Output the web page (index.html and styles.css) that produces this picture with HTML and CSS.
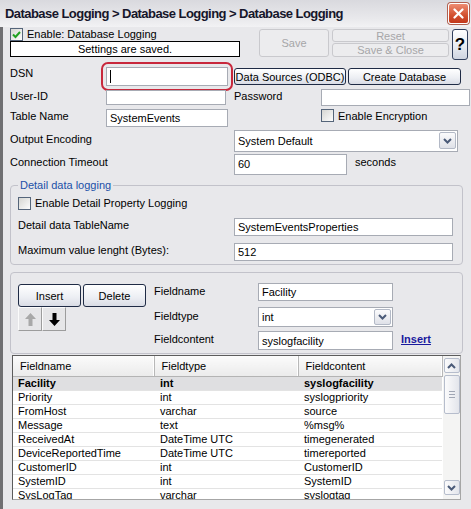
FILE: index.html
```html
<!DOCTYPE html>
<html>
<head>
	<meta charset="UTF-8">
	<title>Database Logging</title>
	<link rel="stylesheet" href="styles.css">
</head>
<body>

<div class="titlebar">
	<span class="title">Database Logging &gt; Database Logging &gt; Database Logging</span>
	<span class="closebtn">
		<svg width="11" height="11" viewBox="0 0 11 11"><path d="M1.5 1.5 L9.5 9.5 M9.5 1.5 L1.5 9.5" stroke="#fff" stroke-width="2.2" stroke-linecap="round"/></svg>
	</span>
</div>

<div class="frame">

	<div class="top">
		<div class="status">
			<div class="chk">
				<span class="box"><svg width="11" height="11" viewBox="0 0 11 11"><path d="M2 5.5 L4.5 8 L9 3" fill="none" stroke="#21a121" stroke-width="2"/></svg></span>
				Enable: Database Logging
			</div>
			<div class="saved">Settings are saved.</div>
		</div>
		<button class="btn off save">Save</button>
		<div class="stack">
			<button class="btn off reset">Reset</button>
			<button class="btn off close">Save &amp; Close</button>
		</div>
		<button class="btn help">?</button>
	</div>

	<div class="row r1">
		<span class="lbl w91">DSN</span>
		<span class="ring"><span class="inp dsn"><span class="caret"></span></span></span>
		<button class="btn dark src">Data Sources (ODBC)</button>
		<button class="btn dark mk">Create Database</button>
	</div>

	<div class="row r2">
		<span class="lbl w96">User-ID</span>
		<input class="inp uid" type="text" value="">
		<span class="lbl pwl">Password</span>
		<input class="inp pw" type="password" value="">
	</div>

	<div class="row r3">
		<span class="lbl w96">Table Name</span>
		<input class="inp tbl" type="text" value="SystemEvents">
		<div class="chk enc"><span class="box"></span>Enable Encryption</div>
	</div>

	<div class="row r4">
		<span class="lbl w224">Output Encoding</span>
		<div class="select enc-sel">
			<span class="val">System Default</span>
			<span class="drop"><svg width="9" height="6" viewBox="0 0 9 6"><path d="M1 1 L4.5 4.5 L8 1" fill="none" stroke="#4a5a78" stroke-width="2"/></svg></span>
		</div>
	</div>

	<div class="row r5">
		<span class="lbl w224">Connection Timeout</span>
		<input class="inp tmo" type="text" value="60">
		<span class="lbl sec">seconds</span>
	</div>

	<fieldset class="group g1">
		<legend>Detail data logging</legend>
		<div class="chk"><span class="box"></span>Enable Detail Property Logging</div>
		<div class="row grow first">
			<span class="lbl w216">Detail data TableName</span>
			<input class="inp wide" type="text" value="SystemEventsProperties">
		</div>
		<div class="row grow">
			<span class="lbl w216">Maximum value lenght (Bytes):</span>
			<input class="inp wide" type="text" value="512">
		</div>
	</fieldset>

	<fieldset class="group g2">
		<div class="btncol">
			<div class="pair">
				<button class="btn dark act">Insert</button>
				<button class="btn dark act">Delete</button>
			</div>
			<div class="arrows">
				<button class="btn arr">
					<svg width="11" height="13" viewBox="0 0 11 13"><path d="M5.5 0 L11 6 L7.5 6 L7.5 13 L3.5 13 L3.5 6 L0 6 Z" fill="#a8a8a8"/></svg>
				</button>
				<button class="btn arr">
					<svg width="11" height="13" viewBox="0 0 11 13"><path d="M3.5 0 L7.5 0 L7.5 7 L11 7 L5.5 13 L0 7 L3.5 7 Z" fill="#000"/></svg>
				</button>
			</div>
		</div>
		<div class="fields">
			<div class="frow fr1">
				<span class="lbl w104">Fieldname</span>
				<input class="inp fld" type="text" value="Facility">
			</div>
			<div class="frow fr2">
				<span class="lbl w104">Fieldtype</span>
				<div class="select fld-sel">
					<span class="val">int</span>
					<span class="drop"><svg width="9" height="6" viewBox="0 0 9 6"><path d="M1 1 L4.5 4.5 L8 1" fill="none" stroke="#4a5a78" stroke-width="2"/></svg></span>
				</div>
			</div>
			<div class="frow fr3">
				<span class="lbl w104">Fieldcontent</span>
				<input class="inp fld" type="text" value="syslogfacility">
				<a class="link" href="#">Insert</a>
			</div>
		</div>
	</fieldset>

	<div class="list">
		<table class="grid">
			<colgroup><col class="c1"><col class="c2"><col class="c3"></colgroup>
			<thead>
				<tr><th>Fieldname</th><th>Fieldtype</th><th>Fieldcontent</th></tr>
			</thead>
			<tbody>
				<tr class="sel"><td>Facility</td><td>int</td><td>syslogfacility</td></tr>
				<tr><td>Priority</td><td>int</td><td>syslogpriority</td></tr>
				<tr><td>FromHost</td><td>varchar</td><td>source</td></tr>
				<tr><td>Message</td><td>text</td><td>%msg%</td></tr>
				<tr><td>ReceivedAt</td><td>DateTime UTC</td><td>timegenerated</td></tr>
				<tr><td>DeviceReportedTime</td><td>DateTime UTC</td><td>timereported</td></tr>
				<tr><td>CustomerID</td><td>int</td><td>CustomerID</td></tr>
				<tr><td>SystemID</td><td>int</td><td>SystemID</td></tr>
				<tr><td>SysLogTag</td><td>varchar</td><td>syslogtag</td></tr>
			</tbody>
		</table>
		<div class="sb">
			<span class="sbtn"><svg width="9" height="6" viewBox="0 0 9 6"><path d="M1 5 L4.5 1.5 L8 5" fill="none" stroke="#4a5a78" stroke-width="2"/></svg></span>
			<span class="thumb"><span class="grip"></span></span>
			<span class="track"></span>
			<span class="sbtn"><svg width="9" height="6" viewBox="0 0 9 6"><path d="M1 1 L4.5 4.5 L8 1" fill="none" stroke="#4a5a78" stroke-width="2"/></svg></span>
		</div>
	</div>

</div>
</body>
</html>
```

FILE: styles.css
```css
body{
	margin:0;
	width:471px;
	height:509px;
	overflow:hidden;
	background:#e8e8eb;
	font:11px "Liberation Sans", Arial, sans-serif;
	color:#000;
}

/* title bar */
.titlebar{
	height:27px;
	box-sizing:border-box;
	display:flex;
	align-items:center;
	justify-content:space-between;
	padding:0 2px 0 5px;
	background:linear-gradient(#d9d9de, #e9e9ec 70%, #f2f2f4);
}
.title{
	font:bold 13px "Liberation Sans", Arial, sans-serif;
	letter-spacing:-0.55px;
	color:#16162a;
	white-space:nowrap;
}
.closebtn{
	width:21px;
	height:21px;
	box-sizing:border-box;
	border:1px solid #fff;
	border-radius:3px;
	box-shadow:0 0 0 1px #b06050;
	background:linear-gradient(#ee8c72, #d2502f 60%, #c2381c);
	display:flex;
	align-items:center;
	justify-content:center;
}

.frame{
	height:482px;
	box-sizing:border-box;
	border-left:3px solid #6f6f72;
	padding-left:7px;
}

/* generic controls */
button{
	font:inherit;
	padding:0;
	margin:0;
	color:#000;
}
.btn{
	box-sizing:border-box;
	border-radius:3px;
	display:flex;
	align-items:center;
	justify-content:center;
}
.btn.off{
	border:1px solid #c9c9cd;
	background:#ececee;
	color:#a6a6a8;
}
.btn.dark{
	border:1px solid #1f2b45;
	background:linear-gradient(#ffffff, #eceef3 60%, #d9dce5);
}
.inp{
	box-sizing:border-box;
	border:1px solid #a7abb4;
	background:#fff;
	font:inherit;
	color:#000;
	padding:0 0 0 3px;
	margin:0;
	outline:none;
}
.lbl{
	flex:none;
	margin-bottom:4px;
}
.w91{ width:91px; }
.w96{ width:96px; }
.w104{ width:104px; }
.w216{ width:216px; }
.w224{ width:224px; }

.chk{
	display:flex;
	align-items:center;
	gap:4px;
	height:14px;
}
.box{
	width:13px;
	height:13px;
	box-sizing:border-box;
	border:1px solid #55657a;
	background:linear-gradient(135deg, #d6d6d2, #fdfdfd);
	display:flex;
	align-items:center;
	justify-content:center;
}

.select{
	box-sizing:border-box;
	border:1px solid #a7abb4;
	background:#fff;
	display:flex;
	align-items:center;
	justify-content:space-between;
	padding:0 1px 0 3px;
}
.drop{
	width:17px;
	box-sizing:border-box;
	border:1px solid #b3b9c6;
	border-radius:2px;
	background:linear-gradient(#fbfbfc, #dfe1e8);
	display:flex;
	align-items:center;
	justify-content:center;
}

/* header */
.top{
	display:flex;
	height:35px;
}
.status{
	width:230px;
}
.saved{
	height:16px;
	box-sizing:border-box;
	border:1px solid #000;
	background:#fff;
	text-align:center;
	line-height:14px;
}
.save{
	margin:2px 0 0 19px;
	width:70px;
	height:28px;
}
.stack{
	margin:2px 0 0 3px;
	width:117px;
	display:flex;
	flex-direction:column;
	gap:1px;
}
.reset{ height:13px; }
.close{ height:14px; }
.help{
	margin:2px 0 0 3px;
	width:16px;
	height:31px;
	border:1px solid #34415e;
	background:linear-gradient(#ffffff, #e6e9f0 60%, #cfd4e0);
	font:bold 17px "Liberation Sans", Arial, sans-serif;
}

/* form rows */
.row{
	display:flex;
	align-items:center;
}
.r1{ height:26px; }
.r2{ height:19px; }
.r3{ height:22px; }
.r4{ height:23px; }
.r5{ height:24px; }

.ring{
	align-self:flex-start;
	border:2px solid #c8283c;
	border-radius:7px;
	padding:3px;
}
.dsn{
	display:flex;
	align-items:center;
	width:122px;
	height:19px;
}
.caret{
	width:1px;
	height:13px;
	background:#000;
}
.src{
	align-self:flex-start;
	margin:6px 0 0 1px;
	width:112px;
	height:17px;
}
.mk{
	align-self:flex-start;
	margin:6px 0 0 2px;
	width:113px;
	height:17px;
}
.uid{ width:120px; height:15px; }
.pwl{ width:87px; margin-left:8px; }
.pw{ width:149px; height:17px; }
.tbl{ width:122px; height:18px; }
.enc{ margin:0 0 5px 93px; }
.enc-sel{ width:224px; height:22px; }
.enc-sel .drop{ height:17px; }
.tmo{ width:113px; height:21px; }
.sec{ margin-left:8px; }

/* group boxes */
.group{
	margin:0 8px 0 0;
	border:1px solid #c2c2ca;
	border-radius:4px;
	min-width:0;
}
.g1{
	margin-top:3px;
	padding:4px 9px 3px 7px;
}
.g1 legend{
	padding:0 2px;
	color:#2150a8;
	line-height:13px;
}
.grow{ height:18px; margin-top:7px; }
.grow.first{ margin-top:8px; }
.wide{ width:219px; height:18px; }

.g2{
	margin-top:7px;
	padding:10px 9px 3px 7px;
	display:flex;
}
.btncol{
	width:136px;
	margin-top:1px;
}
.pair{
	display:flex;
	gap:2px;
}
.act{
	width:63px;
	height:23px;
}
.arrows{
	display:flex;
}
.arr{
	width:24px;
	height:24px;
	border-radius:0;
	border:1px solid;
	border-color:#fbfbfb #9c9c9c #9c9c9c #fbfbfb;
	background:#e6e6e8;
}
.frow{
	display:flex;
	align-items:center;
}
.fr1{ height:18px; }
.fr2{ height:20px; margin-top:6px; }
.fr3{ height:19px; margin-top:4px; }
.frow .lbl{ margin-bottom:3px; }
.fld{ width:135px; height:100%; }
.fld-sel{ width:135px; height:20px; }
.fld-sel .drop{ height:16px; }
.link{
	margin:0 0 3px 8px;
	color:#1a1a9e;
	font-weight:bold;
	text-decoration:underline;
}

/* list view */
.list{
	margin:1px 10px 0 2px;
	height:145px;
	box-sizing:border-box;
	border:1px solid;
	border-color:#5c5c5c #a6a6a6 #a6a6a6 #5c5c5c;
	background:#fff;
	display:flex;
	overflow:hidden;
}
.grid{
	width:429px;
	flex:none;
	table-layout:fixed;
	border-collapse:collapse;
	align-self:flex-start;
}
.c1{ width:141px; }
.c2{ width:144px; }
.c3{ width:144px; }
.grid th{
	height:20px;
	box-sizing:border-box;
	padding:0 0 0 7px;
	text-align:left;
	font-weight:normal;
	background:linear-gradient(#fbfbfb, #ebebeb);
	border-bottom:1px solid #b4b4b4;
	border-right:1px solid #b8b8b8;
	box-shadow:inset -1px 0 #fff;
}
.grid td{
	height:14px;
	box-sizing:border-box;
	padding:0 0 0 6px;
	line-height:13px;
	border-bottom:1px solid #e3e3e3;
	white-space:nowrap;
	overflow:hidden;
}
.grid td:first-child{ padding-left:5px; }
.grid tr.sel td{
	background:#dfdfe1;
	font-weight:bold;
}
.sb{
	width:18px;
	flex:none;
	box-sizing:border-box;
	padding:2px 1px 4px 1px;
	background:#f4f4f3;
	display:flex;
	flex-direction:column;
}
.sbtn, .thumb{
	box-sizing:border-box;
	border:1px solid #b6bdcc;
	border-radius:2px;
	background:linear-gradient(90deg, #fbfbfc, #e3e5eb);
	display:flex;
	align-items:center;
	justify-content:center;
}
.sbtn{ height:15px; }
.thumb{
	height:39px;
	margin-top:2px;
}
.grip{
	width:6px;
	height:5px;
	border-top:1px solid #a0a6b4;
	border-bottom:1px solid #a0a6b4;
	background:linear-gradient(#a0a6b4, #a0a6b4) center/6px 1px no-repeat;
}
.track{ flex:1; }
```
